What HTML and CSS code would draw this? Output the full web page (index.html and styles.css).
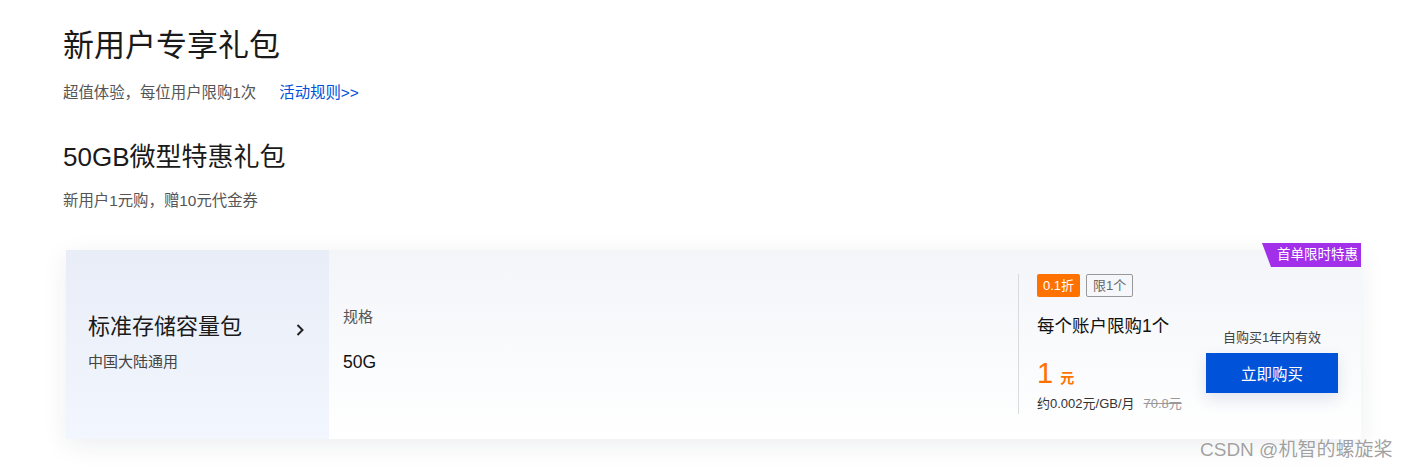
FILE: index.html
```html
<!DOCTYPE html>
<html lang="zh-CN">
<head>
<meta charset="utf-8">
<title>新用户专享礼包</title>
<link rel="stylesheet" href="styles.css">
</head>
<body>
<div class="page">
  <h1 class="title">新用户专享礼包</h1>
  <p class="desc">超值体验，每位用户限购1次<a class="rule" href="#">活动规则&gt;&gt;</a></p>

  <h2 class="sub-title">50GB微型特惠礼包</h2>
  <p class="desc desc-2">新用户1元购，赠10元代金券</p>

  <div class="card">
    <div class="badge">首单限时特惠</div>
    <div class="card-left">
      <div class="left-text">
        <div class="left-title">标准存储容量包</div>
        <div class="left-sub">中国大陆通用</div>
      </div>
      <svg class="chevron" viewBox="0 0 10 14" width="10" height="14"><path d="M2.5 2 L7.5 7 L2.5 12" fill="none" stroke="#222" stroke-width="2"/></svg>
    </div>
    <div class="card-mid">
      <div class="spec-label">规格</div>
      <div class="spec-value">50G</div>
    </div>
    <div class="card-info">
      <div class="tags">
        <span class="tag-off">0.1折</span>
        <span class="tag-limit">限1个</span>
      </div>
      <div class="info-title">每个账户限购1个</div>
      <div class="price"><span class="price-num">1</span><span class="price-unit">元</span></div>
      <div class="price-sub">约0.002元/GB/月<span class="price-old">70.8元</span></div>
    </div>
    <div class="card-buy">
      <div class="buy-note">自购买1年内有效</div>
      <button class="buy-btn">立即购买</button>
    </div>
  </div>
</div>
<div class="watermark">CSDN @机智的螺旋桨</div>
</body>
</html>
```

FILE: styles.css
```css
html, body {
  margin: 0;
  padding: 0;
  background: #fff;
}
body {
  font-family: "Liberation Sans", "Noto Sans CJK SC", sans-serif;
  color: #222;
  width: 1406px;
  height: 469px;
  overflow: hidden;
  position: relative;
}
.page {
  padding: 24px 0 0 63px;
}
.title {
  margin: 0;
  font-size: 31px;
  line-height: 44px;
  font-weight: 400;
  color: #1a1a1a;
}
.desc {
  margin: 15px 0 0;
  font-size: 15.4px;
  line-height: 20px;
  color: #555;
}
.rule {
  color: #0052d9;
  text-decoration: none;
  margin-left: 23px;
}
.sub-title {
  margin: 36px 0 0;
  font-size: 26px;
  line-height: 36px;
  font-weight: 400;
  color: #1a1a1a;
}
.desc-2 {
  margin-top: 16px;
}
.card {
  position: relative;
  margin: 39px 0 0 3px;
  width: 1295px;
  height: 189px;
  display: flex;
  background: linear-gradient(180deg, #f3f5f9 0%, #ffffff 100%);
  box-shadow: 0 6px 24px rgba(30, 40, 70, 0.08);
}
.badge {
  position: absolute;
  top: -7px;
  right: 0;
  width: 99px;
  height: 24px;
  box-sizing: border-box;
  padding-right: 3px;
  background: #a22fe9;
  color: #fff;
  font-size: 13.5px;
  line-height: 24px;
  text-align: right;
  clip-path: polygon(0 0, 100% 0, 100% 100%, 9px 100%);
}
.card-left {
  width: 263px;
  box-sizing: border-box;
  padding: 0 24px 0 22px;
  display: flex;
  align-items: center;
  justify-content: space-between;
  background: linear-gradient(180deg, #e8edf7 0%, #f2f6fe 100%);
}
.left-text {
  margin-top: -4px;
}
.left-title {
  font-size: 22px;
  line-height: 28px;
  color: #1a1a1a;
}
.left-sub {
  margin-top: 11px;
  font-size: 15px;
  line-height: 20px;
  color: #444;
}
.chevron {
  margin-top: -30px;
}
.card-mid {
  flex: 1;
  padding: 57px 0 0 14px;
}
.spec-label {
  font-size: 15px;
  line-height: 20px;
  color: #555;
}
.spec-value {
  margin-top: 23px;
  font-size: 17.5px;
  line-height: 24px;
  color: #111;
}
.card-info {
  width: 188px;
  box-sizing: border-box;
  margin-top: 24px;
  height: 140px;
  border-left: 1px solid #d8dbe0;
  padding-left: 18px;
}
.tags {
  display: flex;
  gap: 6px;
}
.tag-off {
  display: inline-block;
  height: 23px;
  line-height: 23px;
  padding: 0 6px;
  background: #ff7200;
  color: #fff;
  font-size: 13px;
  border-radius: 2px;
}
.tag-limit {
  display: inline-block;
  height: 23px;
  box-sizing: border-box;
  line-height: 21px;
  padding: 0 6px;
  border: 1px solid #999;
  color: #666;
  font-size: 13px;
  border-radius: 2px;
}
.info-title {
  margin-top: 17px;
  font-size: 17.5px;
  line-height: 24px;
  color: #111;
}
.price {
  margin-top: 19px;
  height: 32px;
  display: flex;
  align-items: baseline;
  color: #ff7200;
}
.price-num {
  font-size: 29px;
  line-height: 32px;
}
.price-unit {
  margin-left: 7px;
  font-size: 14px;
  font-weight: 700;
}
.price-sub {
  margin-top: 6px;
  font-size: 13px;
  line-height: 18px;
  color: #333;
  white-space: nowrap;
}
.price-old {
  margin-left: 9px;
  color: #999;
  text-decoration: line-through;
}
.card-buy {
  width: 132px;
  margin-top: 79px;
  margin-right: 23px;
  display: flex;
  flex-direction: column;
  align-items: center;
}
.buy-note {
  font-size: 13px;
  line-height: 18px;
  color: #444;
}
.buy-btn {
  margin-top: 6px;
  width: 132px;
  height: 40px;
  border: none;
  background: #0052d9;
  color: #fff;
  font-family: inherit;
  font-size: 15.5px;
  box-shadow: 0 6px 16px rgba(0, 40, 120, 0.12);
  cursor: pointer;
}
.watermark {
  position: absolute;
  left: 1200px;
  top: 438px;
  font-size: 19px;
  line-height: 24px;
  color: rgba(120, 120, 120, 0.7);
  text-shadow: 0 0 2px #fff;
  white-space: nowrap;
}
```
